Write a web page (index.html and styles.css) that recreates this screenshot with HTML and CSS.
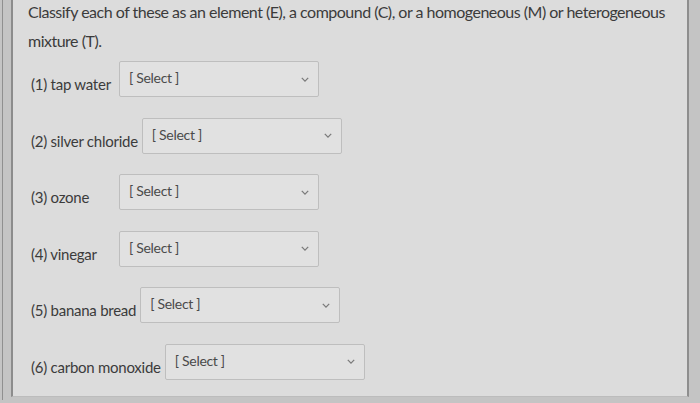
FILE: index.html
```html
<!DOCTYPE html>
<html lang="en">
<head>
  <meta charset="UTF-8">
  <meta name="viewport" content="width=device-width, initial-scale=1.0">
  <title>Classify</title>
  <link rel="stylesheet" href="styles.css">
</head>
<body>
  <div class="frame">
    <div class="question">
      <p class="prompt">Classify each of these as an element (E), a compound (C), or a homogeneous (M) or heterogeneous mixture (T).</p>

      <div class="row">
        <span class="label">(1) tap water</span>
        <div class="dropdown"><span>[ Select ]</span><svg class="chevron" viewBox="0 0 10 6"><path d="M1 1 L5 5 L9 1"/></svg></div>
      </div>

      <div class="row">
        <span class="label">(2) silver chloride</span>
        <div class="dropdown"><span>[ Select ]</span><svg class="chevron" viewBox="0 0 10 6"><path d="M1 1 L5 5 L9 1"/></svg></div>
      </div>

      <div class="row">
        <span class="label">(3) ozone</span>
        <div class="dropdown"><span>[ Select ]</span><svg class="chevron" viewBox="0 0 10 6"><path d="M1 1 L5 5 L9 1"/></svg></div>
      </div>

      <div class="row">
        <span class="label">(4) vinegar</span>
        <div class="dropdown"><span>[ Select ]</span><svg class="chevron" viewBox="0 0 10 6"><path d="M1 1 L5 5 L9 1"/></svg></div>
      </div>

      <div class="row">
        <span class="label">(5) banana bread</span>
        <div class="dropdown"><span>[ Select ]</span><svg class="chevron" viewBox="0 0 10 6"><path d="M1 1 L5 5 L9 1"/></svg></div>
      </div>

      <div class="row">
        <span class="label">(6) carbon monoxide</span>
        <div class="dropdown"><span>[ Select ]</span><svg class="chevron" viewBox="0 0 10 6"><path d="M1 1 L5 5 L9 1"/></svg></div>
      </div>
    </div>
  </div>
</body>
</html>
```

FILE: styles.css
```css
body {
  margin: 0;
  padding: 0 0 0 2px;
  background-color: #c4c4c4;
  font-family: 'Lato', 'Open Sans', sans-serif;
  color: #3b3b3b;
  overflow: hidden;
}

.frame {
  border-left: 1px solid #8f8f8f;
  padding-left: 8px;
  height: 403px;
}

.question {
  background-color: #dcdcdc;
  border-left: 2px solid #8c8c8c;
  border-right: 2px solid #8e8e8e;
  border-bottom: 1px solid #bcbcbc;
  width: 678px;
  height: 400px;
  box-sizing: border-box;
  padding: 0 15px;
}

.prompt {
  margin: -3px 0 0;
  font-size: 16px;
  letter-spacing: -0.5px;
  line-height: 29px;
}

.row {
  display: flex;
  align-items: center;
  gap: 4px;
  margin-top: 20.6px;
  padding-left: 3px;
}

.row:first-of-type {
  margin-top: 6px;
}

.label {
  min-width: 84px;
  font-size: 15px;
  letter-spacing: -0.25px;
  padding-top: 10px;
}

.dropdown {
  display: flex;
  align-items: center;
  justify-content: space-between;
  width: 200px;
  height: 36px;
  box-sizing: border-box;
  padding: 0 9px;
  border: 1px solid #bebebe;
  border-radius: 2px;
  background-color: #e1e1e1;
  color: #4a4a4a;
  font-size: 14px;
  letter-spacing: -0.3px;
}

.dropdown span {
  margin-top: -3px;
}

.chevron {
  width: 8px;
  height: 5px;
  fill: none;
  stroke: #7a7a7a;
  stroke-width: 1.6;
}
```
